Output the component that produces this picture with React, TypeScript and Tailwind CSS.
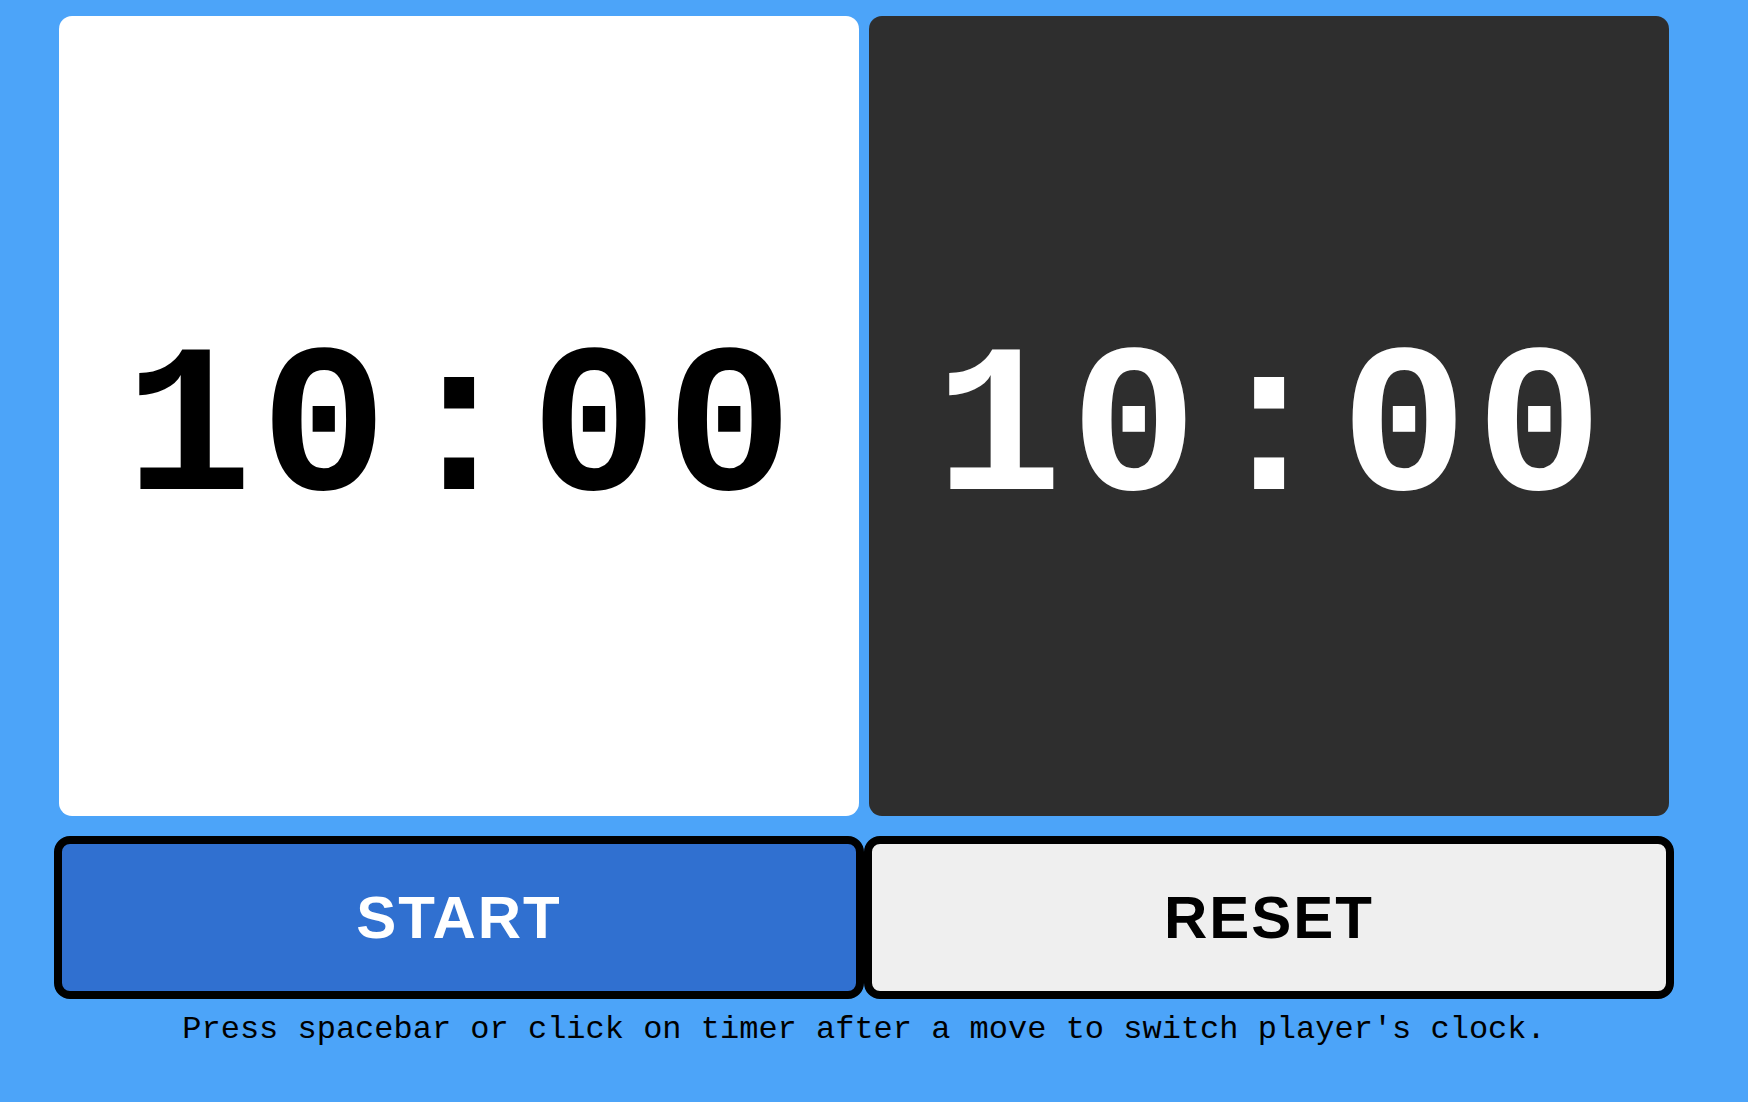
import React from "react";

export default function App() {
  return (
    <div className="min-h-screen w-full bg-[#4ca4f9] pl-[54px] pt-[11px]">
      <div className="w-[1620px]">
        <div className="grid grid-cols-2">
          <div className="m-[5px] h-[800px] rounded-[13px] bg-white flex items-center justify-center">
            <span className="pt-[34px] pl-[8px] text-[212px] tracking-[8px] font-bold text-black leading-none font-['Liberation_Mono','Courier_New',monospace]">
              10:00
            </span>
          </div>
          <div className="m-[5px] h-[800px] rounded-[13px] bg-[#2e2e2e] flex items-center justify-center">
            <span className="pt-[34px] pl-[8px] text-[212px] tracking-[8px] font-bold text-white leading-none font-['Liberation_Mono','Courier_New',monospace]">
              10:00
            </span>
          </div>
        </div>
        <div className="grid grid-cols-2 mt-[15px]">
          <button className="h-[163px] rounded-[16px] border-[8px] border-black bg-[#3070d0] text-white text-[60px] font-bold tracking-[2px] font-['Liberation_Sans',Arial,sans-serif] flex items-center justify-center">
            START
          </button>
          <button className="h-[163px] rounded-[16px] border-[8px] border-black bg-[#efefef] text-black text-[60px] font-bold tracking-[2px] font-['Liberation_Sans',Arial,sans-serif] flex items-center justify-center">
            RESET
          </button>
        </div>
        <p className="mt-[13px] text-center text-[32px] leading-[36px] text-black font-['Liberation_Mono','Courier_New',monospace]">
          Press spacebar or click on timer after a move to switch player's clock.
        </p>
      </div>
    </div>
  );
}
